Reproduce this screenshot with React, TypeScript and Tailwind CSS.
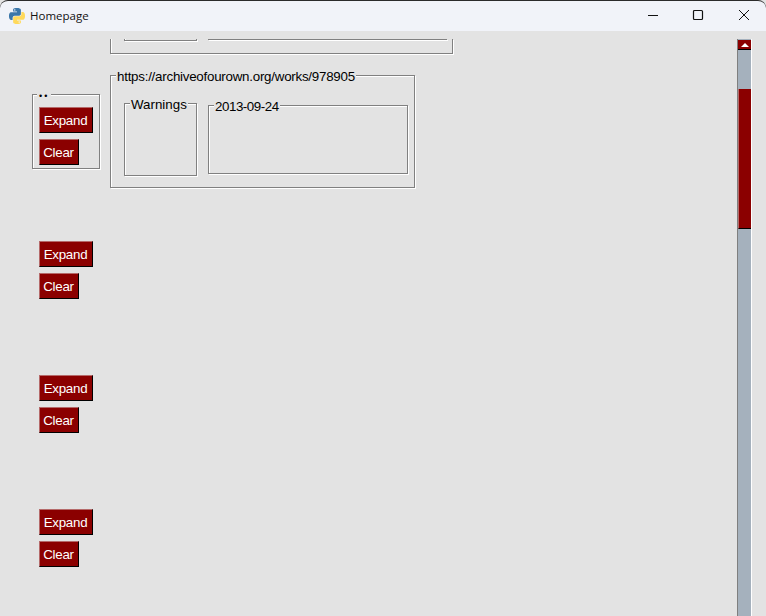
const frame = "border border-[#808080] shadow-[inset_1px_1px_0_#fff,1px_1px_0_#fff]";
const cutFrame = "border border-t-0 border-[#808080] shadow-[inset_1px_0_0_#fff,1px_1px_0_#fff]";
const legendText = "ml-[5px] px-[1px] pt-px h-[15px] leading-[15px] whitespace-nowrap bg-[#e3e3e3]";

const PythonIcon = () => (
  <svg viewBox="0 0 24 24" className="w-[16px] h-[16px]">
    <path
      fill="#3a76a9"
      fillRule="evenodd"
      d="M14.25.18l.9.2.73.26.59.3.45.32.34.34.25.34.16.33.1.3.04.26.02.2-.01.13V8.5l-.05.63-.13.55-.21.46-.26.38-.3.31-.33.25-.35.19-.35.14-.33.1-.3.07-.26.04-.21.02H8.77l-.69.05-.59.14-.5.22-.41.27-.33.32-.27.35-.2.36-.15.37-.1.35-.07.32-.04.27-.02.21v3.06H3.17l-.21-.03-.28-.07-.32-.12-.35-.18-.36-.26-.36-.36-.35-.46-.32-.59-.28-.73-.21-.88-.14-1.05-.05-1.23.06-1.22.16-1.04.24-.87.32-.71.36-.57.4-.44.42-.33.42-.24.4-.16.36-.1.32-.05.24-.01h.16l.06.01h8.16v-.83H6.18l-.01-2.75-.02-.37.05-.34.11-.31.17-.28.25-.26.31-.23.38-.2.44-.18.51-.15.58-.12.64-.1.71-.06.77-.04.84-.02 1.27.05zm-6.3 1.98l-.23.33-.08.41.08.41.23.34.33.22.41.09.41-.09.33-.22.23-.34.08-.41-.08-.41-.23-.33-.33-.22-.41-.09-.41.09z"
    />
    <path
      fill="#ffd95c"
      fillRule="evenodd"
      d="M21.04 6.11l.28.06.32.12.35.18.36.27.36.35.35.47.32.59.28.73.21.88.14 1.04.05 1.23-.06 1.23-.16 1.04-.24.86-.32.71-.36.57-.4.45-.42.33-.42.24-.4.16-.36.09-.32.05-.24.02-.16-.01h-8.22v.82h5.84l.01 2.76.02.36-.05.34-.11.31-.17.29-.25.25-.31.24-.38.2-.44.17-.51.15-.58.13-.64.09-.71.07-.77.04-.84.01-1.27-.04-1.07-.14-.9-.2-.73-.25-.59-.3-.45-.33-.34-.34-.25-.34-.16-.33-.1-.3-.04-.25-.02-.2.01-.13v-5.34l.05-.64.13-.54.21-.46.26-.38.3-.32.33-.24.35-.2.35-.14.33-.1.3-.06.26-.04.21-.02.13-.01h5.84l.69-.05.59-.14.5-.21.41-.28.33-.32.27-.35.2-.36.15-.36.1-.35.07-.32.04-.28.02-.21V6.07h2.09l.14.01zm-6.47 14.25l-.23.33-.08.41.08.41.23.33.33.23.41.08.41-.08.33-.23.23-.33.08-.41-.08-.41-.23-.33-.33-.23-.41-.08-.41.08z"
    />
  </svg>
);

const TitleBar = () => (
  <div className="h-[31px] shrink-0 flex items-center bg-[#f1f3f9] border-t border-[#2b2b2b] rounded-t-[8px]">
    <div className="ml-[9px]">
      <PythonIcon />
    </div>
    <span className="ml-[5px] text-[11.5px] text-[#111] font-['Open_Sans',sans-serif]">
      Homepage
    </span>
    <div className="ml-auto flex self-start">
      <div className="w-[46px] h-[28px] flex items-center justify-center">
        <svg width="12" height="12" viewBox="0 0 12 12">
          <path d="M1 6.5h10" stroke="#111" fill="none" />
        </svg>
      </div>
      <div className="w-[44px] h-[28px] flex items-center justify-center">
        <svg width="12" height="12" viewBox="0 0 12 12">
          <rect x="1.5" y="1.5" width="9" height="9" rx="1" stroke="#111" strokeWidth="1.2" fill="none" />
        </svg>
      </div>
      <div className="w-[46px] h-[28px] flex items-center justify-center">
        <svg width="14" height="12" viewBox="0 0 14 12">
          <path d="M3 1l10 10M13 1L3 11" stroke="#111" fill="none" />
        </svg>
      </div>
    </div>
  </div>
);

const RedButton = ({ label, width }: { label: string; width: string }) => (
  <button
    className={`${width} h-[26px] pt-px pr-px bg-[#8b0000] text-white text-[13.33px] tracking-[-0.28px] leading-none border-t border-l border-t-[#b56a6a] border-l-[#b56a6a] border-r border-b border-r-black border-b-black`}
  >
    {label}
  </button>
);

const ButtonStack = () => (
  <div className="flex flex-col items-start gap-[6px]">
    <RedButton label="Expand" width="w-[54px]" />
    <RedButton label="Clear" width="w-[40px]" />
  </div>
);

const Scrollbar = () => (
  <div className="w-[15px] mr-[14px] shrink-0 bg-[#a5b1bd] border-l border-l-[#7f7f7f] border-r border-r-white pt-px">
    <div className="h-[10px] bg-[#8b0000] border-b border-black flex items-center justify-center">
      <div className="w-0 h-0 border-x-[4px] border-x-transparent border-b-[4px] border-b-white" />
    </div>
    <div className="h-[140px] mt-[39px] bg-[#8b0000] border-l border-[#b56a6a] border-b border-b-black" />
  </div>
);

export default function App() {
  return (
    <div className="w-[766px] h-[616px] overflow-hidden flex flex-col bg-[#e3e3e3] font-['Liberation_Sans',Arial,sans-serif] text-[13.33px] text-black">
      <TitleBar />
      <div className="flex-1 min-h-0 flex pt-[8px]">
        <div className="flex-1 min-w-0 overflow-hidden">
          {/* bottom of the entry above, cut off by the scroll position */}
          <div className={`${cutFrame} ml-[110px] w-[343px] h-[15px] flex items-start gap-[11px] pl-[13px]`}>
            <div className={`${cutFrame} w-[73px] h-[2px]`} />
            <div className={`${cutFrame} w-[239px] h-[1px]`} />
          </div>

          <div className="flex items-start mt-[14px] ml-[32px]">
            <fieldset className={`${frame} w-[68px] h-[78px] mt-[23px]`}>
              <legend className="ml-[4px] px-[2px] pt-px h-[7px] leading-[8px] text-[9px] tracking-[2px] whitespace-nowrap bg-[#e3e3e3]">
                ••
              </legend>
              <div className="pt-[9px] pl-[6px]">
                <ButtonStack />
              </div>
            </fieldset>

            <fieldset className={`${frame} ml-[10px] w-[305px] h-[120px]`}>
              <legend className={`${legendText} tracking-[-0.24px]`}>
                https://archiveofourown.org/works/978905
              </legend>
              <div className="flex items-start gap-[11px] pt-[13px] pl-[13px]">
                <fieldset className={`${frame} w-[73px] h-[80px]`}>
                  <legend className={legendText}>Warnings</legend>
                </fieldset>
                <fieldset className={`${frame} w-[200px] h-[76px] mt-[2px]`}>
                  <legend className={`${legendText} tracking-[-0.45px]`}>2013-09-24</legend>
                </fieldset>
              </div>
            </fieldset>
          </div>

          <div className="mt-[53px] ml-[39px] flex flex-col gap-[76px]">
            <ButtonStack />
            <ButtonStack />
            <ButtonStack />
          </div>
        </div>
        <Scrollbar />
      </div>
    </div>
  );
}
